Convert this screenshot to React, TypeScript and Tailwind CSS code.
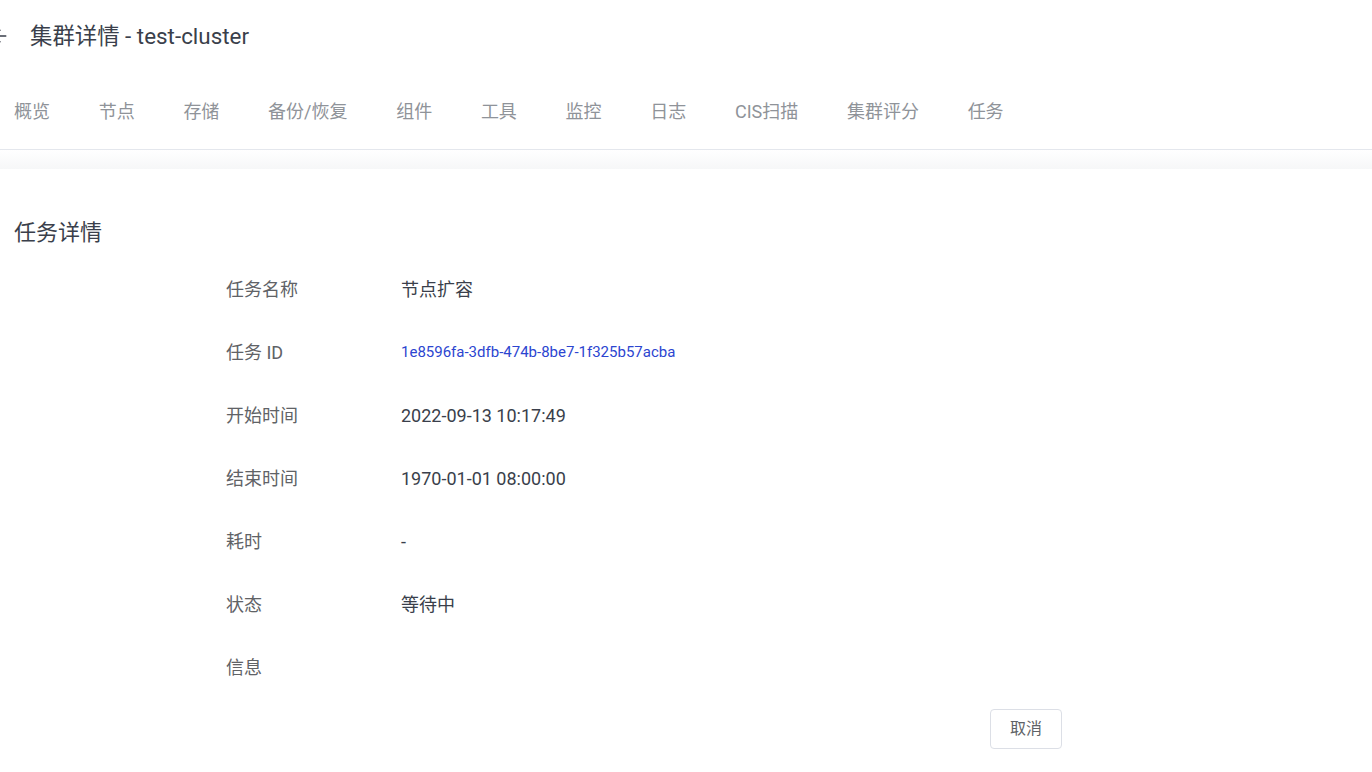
import { ArrowLeft } from "lucide-react"

const tabs = ["概览", "节点", "存储", "备份/恢复", "组件", "工具", "监控", "日志", "CIS扫描", "集群评分", "任务"]

const rows: { label: string; value: string; link?: boolean }[] = [
  { label: "任务名称", value: "节点扩容" },
  { label: "任务 ID", value: "1e8596fa-3dfb-474b-8be7-1f325b57acba", link: true },
  { label: "开始时间", value: "2022-09-13 10:17:49" },
  { label: "结束时间", value: "1970-01-01 08:00:00" },
  { label: "耗时", value: "-" },
  { label: "状态", value: "等待中" },
  { label: "信息", value: "" },
]

export default function App() {
  return (
    <div
      className="min-h-screen w-full overflow-hidden bg-white"
      style={{ fontFamily: "Roboto, 'Noto Sans CJK SC', sans-serif" }}
    >
      {/* Header */}
      <div className="flex h-[72px] items-center">
        <ArrowLeft className="-ml-[10px] h-5 w-5 text-[#3a3f4b]" strokeWidth={1.6} />
        <h1 className="ml-[20px] text-[22.4px] leading-[30px] text-[#3a3f4b]">集群详情 - test-cluster</h1>
      </div>

      {/* Tabs */}
      <div className="flex h-[78px] items-center gap-[48.7px] border-b border-[#e4e7ed] pl-[14px] pt-[2px]">
        {tabs.map((t) => (
          <span key={t} className="text-[18px] leading-6 text-[#8f9399]">
            {t}
          </span>
        ))}
      </div>
      <div className="h-[19px] bg-gradient-to-b from-white to-[#f6f7f8]" />

      {/* Content */}
      <div className="pt-[49px]">
        <h2 className="pl-[14px] text-[22px] leading-[30px] text-[#3a3f4b]">任务详情</h2>
        <div className="mt-[10px] pl-[226px]">
          {rows.map((r) => (
            <div key={r.label} className="flex h-[63px] items-center">
              <span className="w-[175px] text-[18px] text-[#606266]">{r.label}</span>
              {r.link ? (
                <span className="text-[15px] text-[#2c45d0]">{r.value}</span>
              ) : (
                <span className="text-[18px] text-[#3a3f4b]">{r.value}</span>
              )}
            </div>
          ))}
        </div>
        <div className="mt-[10px] flex w-[1062px] justify-end">
          <button className="h-[40px] w-[72px] rounded border border-[#dcdfe6] bg-white text-[16px] text-[#606266]">
            取消
          </button>
        </div>
      </div>
    </div>
  )
}
